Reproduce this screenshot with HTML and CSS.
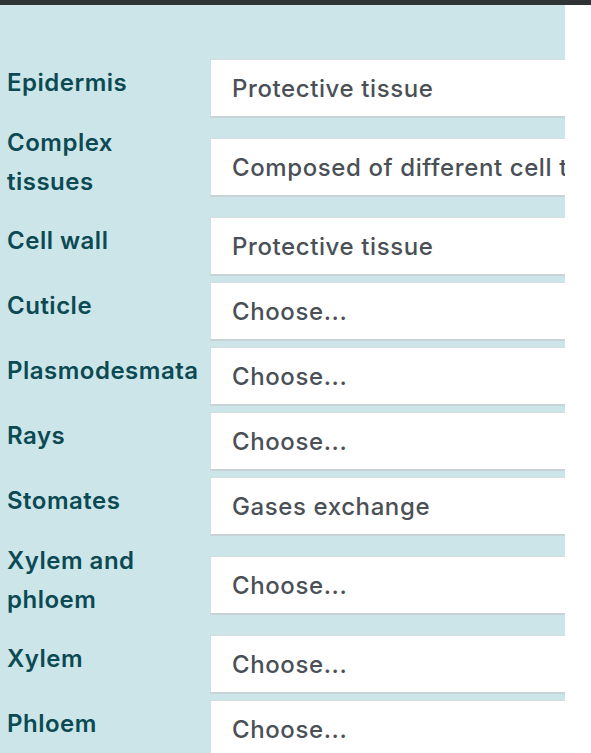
FILE: index.html
```html
<!DOCTYPE html>
<html>
<head>
<meta charset="utf-8">
<link rel="stylesheet" href="styles.css">
</head>
<body>
<div class="topbar"></div>
<div class="panel">
  <div class="row"><div class="label">Epidermis</div><div class="select">Protective tissue</div></div>
  <div class="row"><div class="label">Complex<br>tissues</div><div class="select">Composed of different cell types</div></div>
  <div class="row"><div class="label">Cell wall</div><div class="select">Protective tissue</div></div>
  <div class="row"><div class="label">Cuticle</div><div class="select">Choose...</div></div>
  <div class="row"><div class="label">Plasmodesmata</div><div class="select">Choose...</div></div>
  <div class="row"><div class="label">Rays</div><div class="select">Choose...</div></div>
  <div class="row"><div class="label">Stomates</div><div class="select">Gases exchange</div></div>
  <div class="row"><div class="label">Xylem and<br>phloem</div><div class="select">Choose...</div></div>
  <div class="row"><div class="label">Xylem</div><div class="select">Choose...</div></div>
  <div class="row"><div class="label">Phloem</div><div class="select">Choose...</div></div>
</div>
</body>
</html>
```
FILE: styles.css
```css
html, body {
  margin: 0;
  padding: 0;
  background: #ffffff;
  height: 753px;
  overflow: hidden;
}
.topbar {
  height: 5px;
  background: #2f3336;
}
.panel {
  width: 565px;
  height: 748px;
  background: #cce5e9;
  overflow: hidden;
  padding-top: 51px;
  box-sizing: border-box;
}
.row {
  display: flex;
  align-items: center;
  padding: 3px 0;
}
.label {
  width: 210px;
  flex-shrink: 0;
  box-sizing: border-box;
  padding-left: 7px;
  padding-bottom: 10px;
  font-family: Inter, "Liberation Sans", sans-serif;
  font-weight: 600;
  font-size: 24px;
  line-height: 38.5px;
  color: #0c4a53;
  letter-spacing: 0.5px;
}
.select {
  width: 440px;
  height: 59px;
  flex-shrink: 0;
  box-sizing: border-box;
  background: #ffffff;
  border: 1px solid #d4dde0;
  border-bottom: 2px solid #c9d2d6;
  padding-left: 21px;
  display: flex;
  align-items: center;
  white-space: nowrap;
  font-family: Inter, "Liberation Sans", sans-serif;
  font-weight: 500;
  font-size: 24px;
  color: #4a5056;
  letter-spacing: 0.6px;
}
```
